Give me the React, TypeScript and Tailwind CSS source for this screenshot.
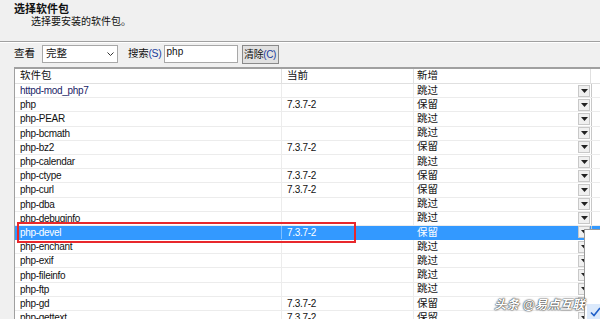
import React from 'react';

type Row = { name: string; cur: string; act: string };

const rows: Row[] = [
  { name: 'httpd-mod_php7', cur: '', act: '跳过' },
  { name: 'php', cur: '7.3.7-2', act: '保留' },
  { name: 'php-PEAR', cur: '', act: '跳过' },
  { name: 'php-bcmath', cur: '', act: '跳过' },
  { name: 'php-bz2', cur: '7.3.7-2', act: '保留' },
  { name: 'php-calendar', cur: '', act: '跳过' },
  { name: 'php-ctype', cur: '7.3.7-2', act: '保留' },
  { name: 'php-curl', cur: '7.3.7-2', act: '保留' },
  { name: 'php-dba', cur: '', act: '跳过' },
  { name: 'php-debuginfo', cur: '', act: '跳过' },
  { name: 'php-devel', cur: '7.3.7-2', act: '保留' },
  { name: 'php-enchant', cur: '', act: '跳过' },
  { name: 'php-exif', cur: '', act: '跳过' },
  { name: 'php-fileinfo', cur: '', act: '跳过' },
  { name: 'php-ftp', cur: '', act: '跳过' },
  { name: 'php-gd', cur: '7.3.7-2', act: '保留' },
  { name: 'php-gettext', cur: '7.3.7-2', act: '保留' },
];

const font = { fontFamily: '"Liberation Sans", "Noto Sans CJK SC", sans-serif' };

function Arrow() {
  return (
    <div className="w-[12px] h-[12px] bg-[#f0f0f0] border border-[#c8c8c8] flex items-center justify-center">
      <svg width="7" height="4" viewBox="0 0 7 4">
        <path d="M0 0h7L3.5 4z" fill="#222" />
      </svg>
    </div>
  );
}

export default function App() {
  return (
    <div className="relative w-[600px] h-[319px] overflow-hidden bg-[#f0f0f0] text-[#111]" style={font}>
      {/* Header */}
      <div className="h-[41px] pl-[14px] pt-[3px]">
        <div className="text-[11px] font-bold leading-[13px]">选择软件包</div>
        <div className="pl-[17px] text-[10px] leading-[12px]">选择要安装的软件包。</div>
      </div>
      <div className="border-t border-[#a0a0a0] border-b border-b-white" />

      {/* Toolbar */}
      <div className="flex items-center h-[20px] mt-[1px] pl-[14px] text-[10.5px] whitespace-nowrap">
        <span>查看</span>
        <div className="ml-[7px] w-[76px] h-[18px] bg-white border border-[#a8a8a8] flex items-center justify-between px-[3px]">
          <span>完整</span>
          <svg width="7" height="5" viewBox="0 0 7 5">
            <path d="M0.5 0.5L3.5 3.5L6.5 0.5" stroke="#333" fill="none" />
          </svg>
        </div>
        <span className="ml-[10px] tracking-[-0.3px]">
          搜索<span className="text-[#1a3c9c]">(S)</span>
        </span>
        <div className="ml-[2px] w-[74px] h-[18px] bg-white border border-[#a8a8a8] px-[2px] text-[10px] leading-[11px]">php</div>
        <div className="ml-[4px] w-[37px] h-[19px] bg-[#e1e1e1] border border-[#8a8a8a] flex items-center justify-center text-[10px] tracking-[-0.4px]">
          清除<span className="text-[#1a3c9c]">(C)</span>
        </div>
      </div>

      {/* Table */}
      <div className="mt-[3px] ml-[14px] w-[600px] bg-white border-t-[2px] border-l border-[#a0a0a0] text-[10px] tracking-[-0.3px]">
        <div className="flex h-[15px] items-center border-b border-[#e0e0e0] bg-white text-[10.5px] tracking-normal">
          <div className="w-[267px] pl-[5px] border-r border-[#e0e0e0] h-full flex items-center">软件包</div>
          <div className="w-[132px] pl-[5px] border-r border-[#e0e0e0] h-full flex items-center">当前</div>
          <div className="w-[177px] pl-[3px] border-r border-[#e0e0e0] h-full flex items-center">新增</div>
          <div className="flex-1" />
        </div>
        {rows.map((r) => {
          const sel = r.name === 'php-devel';
          return (
            <div
              key={r.name}
              className={`flex h-[14.2px] items-center border-b ${sel ? 'bg-[#3399ff] text-white border-[#3399ff]' : 'border-[#ececec]'}`}
            >
              <div className={`w-[267px] h-full pl-[5px] flex items-center border-r ${sel ? 'border-[#7fbfff]' : 'border-[#ececec]'} ${r.name === 'httpd-mod_php7' ? 'text-[#1a2466]' : ''}`}>
                {r.name}
              </div>
              <div className={`w-[132px] h-full pl-[5px] flex items-center border-r ${sel ? 'border-[#3399ff]' : 'border-[#ececec]'}`}>
                {r.cur}
              </div>
              <div className="w-[177px] h-full pl-[3px] pr-[1px] flex items-center justify-between text-[10.5px] tracking-normal">
                <span>{r.act}</span>
                <Arrow />
              </div>
              <div className="flex-1 h-full border-l border-[#c8c8c8]" />
            </div>
          );
        })}
      </div>

      {/* Red highlight */}
      <div className="absolute left-[17px] top-[222px] w-[339px] h-[21px] border-2 border-[#e8282c]" />

      {/* Dropdown popup */}
      <div className="absolute left-[584px] top-[229px] w-[20px] h-[95px] bg-white border border-[#9a9a9a]">
        <div className="absolute left-[2px] top-[74px] w-[16px] h-[16px] bg-[#dbe9fb] flex items-center justify-center">
          <svg width="11" height="10" viewBox="0 0 11 10">
            <path d="M1 5.5L4 8.5L10 1" stroke="#1f5fc8" strokeWidth="1.6" fill="none" />
          </svg>
        </div>
      </div>

      {/* Watermark */}
      <div
        className="absolute left-[494px] top-[298px] text-[12.5px] leading-[15px] text-white italic font-bold"
        style={{ textShadow: '0 0 2px #333, 0 0 1px #000' }}
      >
        头条 @易点互联
      </div>
    </div>
  );
}
